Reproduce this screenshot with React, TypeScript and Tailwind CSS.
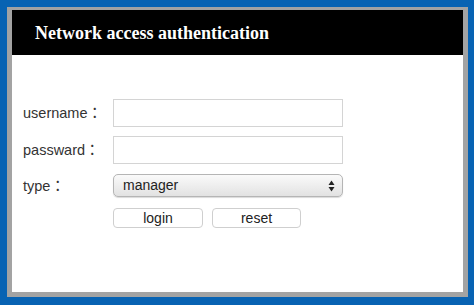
const font = { fontFamily: '"Liberation Sans", "Noto Sans CJK SC", sans-serif' };

function Label({ text }: { text: string }) {
  return (
    <div className="w-[90px] shrink-0 text-[14.5px] text-[#333]" style={font}>
      {text}
      <span style={{ fontFamily: '"Noto Sans CJK JP", sans-serif' }}>：</span>
    </div>
  );
}

export default function App() {
  return (
    <div className="flex h-[305px] w-[474px] flex-col bg-[#0863b3] pb-[8px] pl-[7px] pr-[6px] pt-[7px]">
      <div className="flex flex-1 flex-col border-x-[5px] border-b-[5px] border-t-[3px] border-[#a3a3a3]">
        <div className="flex h-[45px] items-center bg-black pl-[23px] pt-[2px]">
          <h1
            className="text-[18px] font-bold text-white"
            style={{ fontFamily: '"Liberation Serif", serif' }}
          >
            Network access authentication
          </h1>
        </div>
        <div className="flex-1 bg-white pl-[11px] pt-[44px]">
          <div className="flex items-center">
            <Label text="username" />
            <input className="h-[28px] w-[230px] border border-[#d4d4d4] bg-white outline-none" />
          </div>
          <div className="mt-[9px] flex items-center">
            <Label text="passward" />
            <input
              type="password"
              className="h-[28px] w-[230px] border border-[#d4d4d4] bg-white outline-none"
            />
          </div>
          <div className="mt-[10px] flex items-center">
            <Label text="type" />
            <div className="relative flex h-[23px] w-[230px] items-center rounded-[5px] border border-[#b5b5b5] bg-gradient-to-b from-[#fafafa] to-[#e2e2e2] pl-[9px] shadow-[0_1px_1px_rgba(0,0,0,0.15)]">
              <span className="text-[14px] text-[#222]" style={font}>
                manager
              </span>
              <svg
                className="absolute right-[7px] top-[5px]"
                width="7"
                height="12"
                viewBox="0 0 7 12"
              >
                <path d="M3.5 0.5 L6.5 5 L0.5 5 Z" fill="#222" />
                <path d="M3.5 11.5 L6.5 7 L0.5 7 Z" fill="#222" />
              </svg>
            </div>
          </div>
          <div className="ml-[90px] mt-[10px] flex gap-[9px]">
            <button
              className="h-[20px] w-[90px] rounded-[4px] border border-[#cfcfcf] bg-white text-[14px] leading-none text-[#222]"
              style={font}
            >
              login
            </button>
            <button
              className="h-[20px] w-[89px] rounded-[4px] border border-[#cfcfcf] bg-white text-[14px] leading-none text-[#222]"
              style={font}
            >
              reset
            </button>
          </div>
        </div>
      </div>
    </div>
  );
}
